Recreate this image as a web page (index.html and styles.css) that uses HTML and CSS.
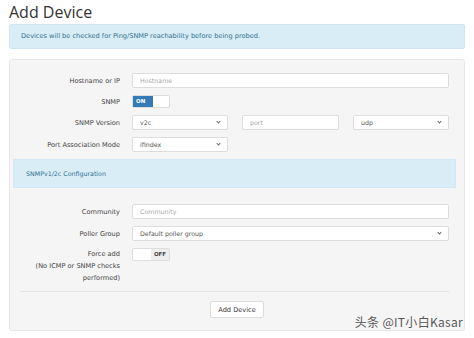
FILE: index.html
```html
<!DOCTYPE html>
<html lang="en">
<head>
    <meta charset="UTF-8">
    <title>Add Device</title>
    <link rel="stylesheet" href="styles.css">
</head>
<body>
    <div class="page">
        <h1 class="title">Add Device</h1>
        <div class="alert">Devices will be checked for Ping/SNMP reachability before being probed.</div>

        <form class="panel">
            <div class="row">
                <label>Hostname or IP</label>
                <input type="text" placeholder="Hostname">
            </div>
            <div class="row">
                <label>SNMP</label>
                <div class="toggle on"><span class="tg-on">ON</span><span class="tg-blank"></span></div>
            </div>
            <div class="row">
                <label>SNMP Version</label>
                <div class="split">
                    <div class="select small">v2c</div>
                    <input type="text" class="port" placeholder="port">
                    <div class="select small">udp</div>
                </div>
            </div>
            <div class="row">
                <label>Port Association Mode</label>
                <div class="split">
                    <div class="select small">ifIndex</div>
                </div>
            </div>

            <div class="section">SNMPv1/2c Configuration</div>

            <div class="row">
                <label>Community</label>
                <input type="text" placeholder="Community">
            </div>
            <div class="row">
                <label>Poller Group</label>
                <div class="select">Default poller group</div>
            </div>
            <div class="row force">
                <label>Force add<br>(No ICMP or SNMP checks<br>performed)</label>
                <div class="toggle"><span class="tg-blank"></span><span class="tg-off">OFF</span></div>
            </div>

            <hr>
            <div class="actions">
                <button type="button">Add Device</button>
            </div>
        </form>

        <div class="watermark">头条 @IT小白Kasar</div>
    </div>
</body>
</html>
```

FILE: styles.css
```css
body {
    margin: 0;
    font-family: "DejaVu Sans", Verdana, sans-serif;
    color: #333;
    background: #fff;
}

.page {
    position: relative;
    width: 474px;
    height: 338px;
    padding: 0 9px;
    box-sizing: border-box;
}

.title {
    margin: 0;
    padding-top: 1px;
    height: 23px;
    font-family: "Open Sans", sans-serif;
    font-weight: 400;
    font-size: 16px;
    line-height: 22px;
    color: #333;
}

.alert {
    height: 25px;
    margin-bottom: 10px;
    padding-left: 11px;
    background: #d9edf7;
    border: 1px solid #cfe6f1;
    border-radius: 2px;
    box-sizing: border-box;
    color: #31708f;
    font-size: 6.6px;
    line-height: 23px;
}

.panel {
    display: flex;
    flex-direction: column;
    height: 272px;
    padding: 13px 15px 0 0;
    background: #f5f5f5;
    border: 1px solid #e6e6e6;
    border-radius: 3px;
    box-sizing: border-box;
}

.row {
    display: grid;
    grid-template-columns: 110px 1fr;
    column-gap: 12px;
    align-items: center;
    margin-bottom: 7px;
}

.row label {
    text-align: right;
    font-size: 6.6px;
    color: #444;
}

input,
.select {
    height: 15px;
    box-sizing: border-box;
    border: 1px solid #ddd;
    border-radius: 2px;
    background: #fff;
    font-family: inherit;
    font-size: 6.3px;
    padding: 0 7px;
    color: #555;
}

input::placeholder {
    color: #aaa;
}

.select {
    position: relative;
    line-height: 13px;
}

.select::after {
    content: "";
    position: absolute;
    right: 7px;
    top: 4px;
    width: 2px;
    height: 2px;
    border-right: 1px solid #666;
    border-bottom: 1px solid #666;
    transform: rotate(45deg);
}

.split {
    display: grid;
    grid-template-columns: 96px 97px 96px;
    column-gap: 14px;
}

.toggle {
    display: flex;
    width: 38px;
    height: 13px;
    border: 1px solid #ddd;
    border-radius: 2px;
    background: #fff;
    box-sizing: border-box;
    font-size: 5.5px;
    font-weight: bold;
    line-height: 11px;
}

.toggle span {
    flex: 1;
}

.tg-on {
    background: #337ab7;
    color: #fff;
    padding-left: 3px;
}

.tg-off {
    background: #eee;
    color: #444;
    text-align: center;
}

.section {
    height: 29px;
    margin: 0 -7px 16px 3px;
    padding-left: 12px;
    background: #d9edf7;
    border: 1px solid #d3e8f3;
    box-sizing: border-box;
    color: #31708f;
    font-size: 6.3px;
    line-height: 28px;
}

.row.force {
    align-items: start;
}

.row.force label {
    line-height: 12px;
}

.row.force .toggle {
    margin-top: 0;
}

hr {
    margin: 0 0 9px 10px;
    border: 0;
    border-top: 1px solid #e3e3e3;
}

.actions {
    display: flex;
    justify-content: center;
    padding-left: 15px;
}

button {
    height: 17px;
    padding: 0 7px;
    background: #fff;
    border: 1px solid #ddd;
    border-radius: 2px;
    font-family: inherit;
    font-size: 6.6px;
    color: #333;
}

.watermark {
    position: absolute;
    right: 11px;
    bottom: 8px;
    font-family: "Noto Sans CJK SC", sans-serif;
    font-size: 12px;
    letter-spacing: 0.3px;
    color: #555;
    text-shadow: 0 0 2px #fff;
}
```
